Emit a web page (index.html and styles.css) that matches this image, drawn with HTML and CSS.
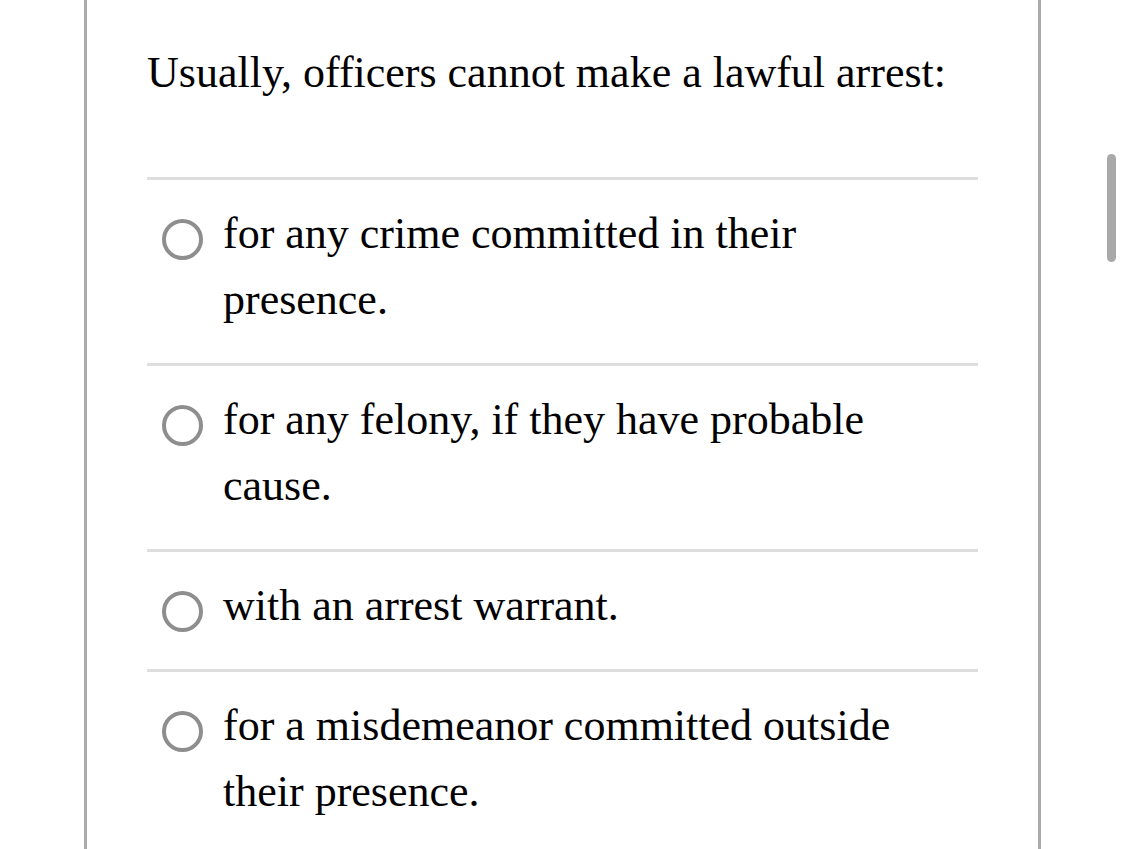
FILE: index.html
```html
<!DOCTYPE html>
<html lang="en">
<head>
<meta charset="utf-8">
<title>Question</title>
<link rel="stylesheet" href="styles.css">
</head>
<body>
<div class="page">
  <p class="question">Usually, officers cannot make a lawful arrest:</p>
  <ul class="options">
    <li class="option"><span class="radio"></span><span class="label">for any crime committed in their presence.</span></li>
    <li class="option"><span class="radio"></span><span class="label">for any felony, if they have probable cause.</span></li>
    <li class="option"><span class="radio"></span><span class="label">with an arrest warrant.</span></li>
    <li class="option"><span class="radio"></span><span class="label">for a misdemeanor committed outside their presence.</span></li>
  </ul>
</div>
<div class="scrollbar"></div>
</body>
</html>
```

FILE: styles.css
```css
html, body {
  margin: 0;
  padding: 0;
  background: #ffffff;
  height: 100%;
  overflow: hidden;
}

body {
  font-family: "Liberation Serif", "Times New Roman", serif;
  color: #000000;
}

.page {
  box-sizing: border-box;
  margin-left: 84px;
  width: 957px;
  min-height: 100vh;
  border-left: 3px solid #ababab;
  border-right: 3px solid #ababab;
  padding: 40px 60px 0 60px;
}

.question {
  margin: 0 0 71px 0;
  font-size: 44px;
  line-height: 66px;
}

.options {
  list-style: none;
  margin: 0;
  padding: 0;
}

.option {
  display: flex;
  align-items: flex-start;
  border-top: 3px solid #dedede;
  padding: 21px 0 30px 0;
}

.radio {
  flex: none;
  box-sizing: border-box;
  width: 41px;
  height: 41px;
  margin: 18px 20px 0 15px;
  border: 4px solid #8e8e8e;
  border-radius: 50%;
}

.label {
  flex: 1;
  font-size: 44px;
  line-height: 66px;
  padding-right: 40px;
}

.scrollbar {
  position: absolute;
  left: 1107px;
  top: 154px;
  width: 9px;
  height: 108px;
  border-radius: 5px;
  background: #a9a9a9;
}
```
